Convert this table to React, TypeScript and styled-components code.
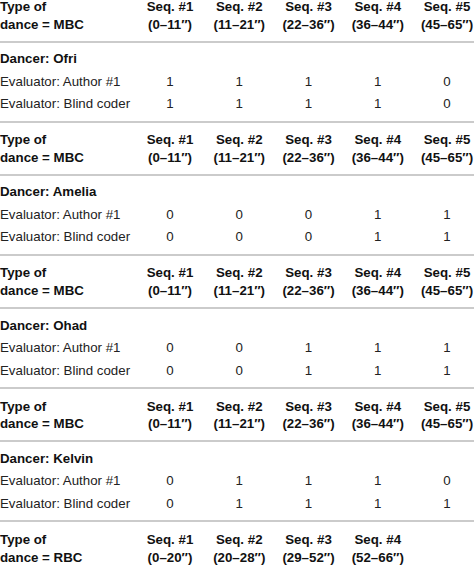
import React from "react";
import styled, { createGlobalStyle } from "styled-components";

const Global = createGlobalStyle`
  html, body {
    margin: 0;
    padding: 0;
    background: #ffffff;
    overflow: hidden;
  }
  body {
    font-family: "Liberation Sans", Arial, Helvetica, sans-serif;
    font-size: 13.3px;
    color: #222222;
  }
`;

const Table = styled.div`
  width: 482px;
  margin-top: -10.6px;
  margin-left: 0;
`;

const COLS = "135.4px repeat(5, 69.25px)";

const HeaderBlock = styled.div`
  display: grid;
  grid-template-columns: ${COLS};
  padding: 8.45px 0 7.45px;
  border-bottom: 2px solid #cbcbcb;
  line-height: 17.7px;
  font-weight: 700;
  color: #111111;
`;

const HeadLabel = styled.div`
  text-align: left;
  white-space: nowrap;
`;

const HeadSeq = styled.div`
  text-align: center;
  white-space: nowrap;
`;

const BodyBlock = styled.div`
  padding: 5.35px 0 5.15px;
  border-bottom: 2px solid #cbcbcb;
`;

const DancerRow = styled.div`
  height: 22.5px;
  line-height: 22.5px;
  font-weight: 700;
  color: #111111;
  white-space: nowrap;
`;

const EvalRow = styled.div`
  display: grid;
  grid-template-columns: ${COLS};
  height: 22.5px;
  line-height: 22.5px;
`;

const EvalLabel = styled.div`
  white-space: nowrap;
`;

const Value = styled.div`
  text-align: center;
`;

type Group = {
  type: string;
  seqs: [string, string][];
  dancer?: string;
  author?: number[];
  blind?: number[];
};

const mbcSeqs: [string, string][] = [
  ["Seq. #1", "(0–11″)"],
  ["Seq. #2", "(11–21″)"],
  ["Seq. #3", "(22–36″)"],
  ["Seq. #4", "(36–44″)"],
  ["Seq. #5", "(45–65″)"],
];

const groups: Group[] = [
  { type: "MBC", seqs: mbcSeqs, dancer: "Ofri", author: [1, 1, 1, 1, 0], blind: [1, 1, 1, 1, 0] },
  { type: "MBC", seqs: mbcSeqs, dancer: "Amelia", author: [0, 0, 0, 1, 1], blind: [0, 0, 0, 1, 1] },
  { type: "MBC", seqs: mbcSeqs, dancer: "Ohad", author: [0, 0, 1, 1, 1], blind: [0, 0, 1, 1, 1] },
  { type: "MBC", seqs: mbcSeqs, dancer: "Kelvin", author: [0, 1, 1, 1, 0], blind: [0, 1, 1, 1, 1] },
  {
    type: "RBC",
    seqs: [
      ["Seq. #1", "(0–20″)"],
      ["Seq. #2", "(20–28″)"],
      ["Seq. #3", "(29–52″)"],
      ["Seq. #4", "(52–66″)"],
    ],
  },
];

export default function App() {
  return (
    <>
      <Global />
      <Table>
        {groups.map((g, gi) => (
          <React.Fragment key={gi}>
            <HeaderBlock>
              <HeadLabel>
                Type of
                <br />
                dance = {g.type}
              </HeadLabel>
              {g.seqs.map(([a, b], i) => (
                <HeadSeq key={i}>
                  {a}
                  <br />
                  {b}
                </HeadSeq>
              ))}
            </HeaderBlock>
            {g.dancer && (
              <BodyBlock>
                <DancerRow>Dancer: {g.dancer}</DancerRow>
                <EvalRow>
                  <EvalLabel>Evaluator: Author #1</EvalLabel>
                  {g.author!.map((v, i) => (
                    <Value key={i}>{v}</Value>
                  ))}
                </EvalRow>
                <EvalRow>
                  <EvalLabel>Evaluator: Blind coder</EvalLabel>
                  {g.blind!.map((v, i) => (
                    <Value key={i}>{v}</Value>
                  ))}
                </EvalRow>
              </BodyBlock>
            )}
          </React.Fragment>
        ))}
      </Table>
    </>
  );
}
